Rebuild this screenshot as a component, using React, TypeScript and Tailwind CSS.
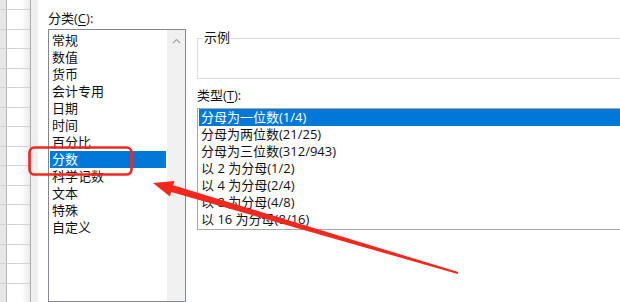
import React from 'react';

const cats = ['常规', '数值', '货币', '会计专用', '日期', '时间', '百分比', '分数', '科学记数', '文本', '特殊', '自定义'];
const types = [
  '分母为一位数(1/4)',
  '分母为两位数(21/25)',
  '分母为三位数(312/943)',
  '以 2 为分母(1/2)',
  '以 4 为分母(2/4)',
  '以 8 为分母(4/8)',
  '以 16 为分母(8/16)',
];

function Sheet() {
  const rows = Array.from({ length: 15 });
  return (
    <div className="flex h-full w-[31px] shrink-0 flex-col border-r border-[#ababab]">
      <div className="flex h-[10px] shrink-0 border-b border-[#d2d2d2]">
        <div className="w-[7px] border-r border-[#b4b4b4] bg-[#e6e6e6]" />
        <div className="flex-1 bg-linear-to-r from-white from-60% to-[#ebebeb]" />
      </div>
      {rows.map((_, i) => (
        <div key={i} className="flex h-[19.55px] shrink-0 border-b border-[#d2d2d2]">
          <div className="w-[7px] border-r border-[#b4b4b4] bg-[#e6e6e6]" />
          <div className="flex-1 bg-linear-to-r from-white from-60% to-[#ebebeb]" />
        </div>
      ))}
    </div>
  );
}

export default function App() {
  return (
    <div
      className="relative flex h-[302px] w-[620px] overflow-hidden bg-white text-[13px] text-[#111]"
      style={{ fontFamily: '"Open Sans", "Noto Sans CJK SC", sans-serif' }}
    >
      <Sheet />
      <div className="h-full w-[7px] shrink-0 bg-[#efefef]" />
      <div className="flex flex-1 pl-[10px] pt-[10px]">
        {/* left column */}
        <div className="flex w-[138px] shrink-0 flex-col">
          <div className="mb-[3px] h-[16px] leading-[16px]">
            分类(<span className="underline underline-offset-2">C</span>):
          </div>
          <div className="flex h-[300px] border border-[#828790]">
            <div className="flex flex-1 flex-col px-[1px] pt-[2px]">
              {cats.map((c, i) => (
                <div
                  key={c}
                  className={
                    i === 7
                      ? 'h-[17px] bg-[#0078d7] pl-[2px] leading-[17px] text-white'
                      : 'h-[17px] pl-[2px] leading-[17px]'
                  }
                >
                  {c}
                </div>
              ))}
            </div>
            <div className="flex w-[18px] justify-center bg-[#f0f0f0] pt-[8px]">
              <svg width="9" height="6" viewBox="0 0 9 6">
                <polyline points="1,5 4.5,1.5 8,5" fill="none" stroke="#a6a6a6" strokeWidth="1.2" />
              </svg>
            </div>
          </div>
        </div>

        {/* right column */}
        <div className="ml-[11px] flex w-[450px] shrink-0 flex-col pt-[28px]">
          <div className="relative h-[41px] border border-[#dcdcdc]">
            <div className="absolute left-[5px] top-[-10px] bg-white px-[1px] leading-[16px]">示例</div>
          </div>
          <div className="mt-[8px] h-[16px] leading-[16px]">
            类型(<span className="underline underline-offset-2">T</span>):
          </div>
          <div className="mt-[5px] flex flex-col border border-[#a8a8a8] pb-[1px] pl-[1px]">
            {types.map((t, i) => (
              <div
                key={t}
                className={
                  i === 0
                    ? 'h-[17px] bg-[#0078d7] pl-[2px] leading-[17px] text-white'
                    : 'h-[17px] pl-[2px] leading-[17px]'
                }
              >
                {t}
              </div>
            ))}
          </div>
        </div>
      </div>

      {/* annotation overlay */}
      <svg
        className="pointer-events-none absolute left-0 top-0"
        width="620"
        height="302"
        viewBox="0 0 620 302"
      >
        <rect x="29.5" y="147.5" width="102" height="27" rx="5" fill="none" stroke="#f2281e" strokeWidth="2.6" />
        <polygon
          points="153,183 174.5,181 173.2,185.3 458.3,272 457.7,274 171.2,192.1 169.9,196.4"
          fill="#f2281e"
        />
      </svg>
    </div>
  );
}
